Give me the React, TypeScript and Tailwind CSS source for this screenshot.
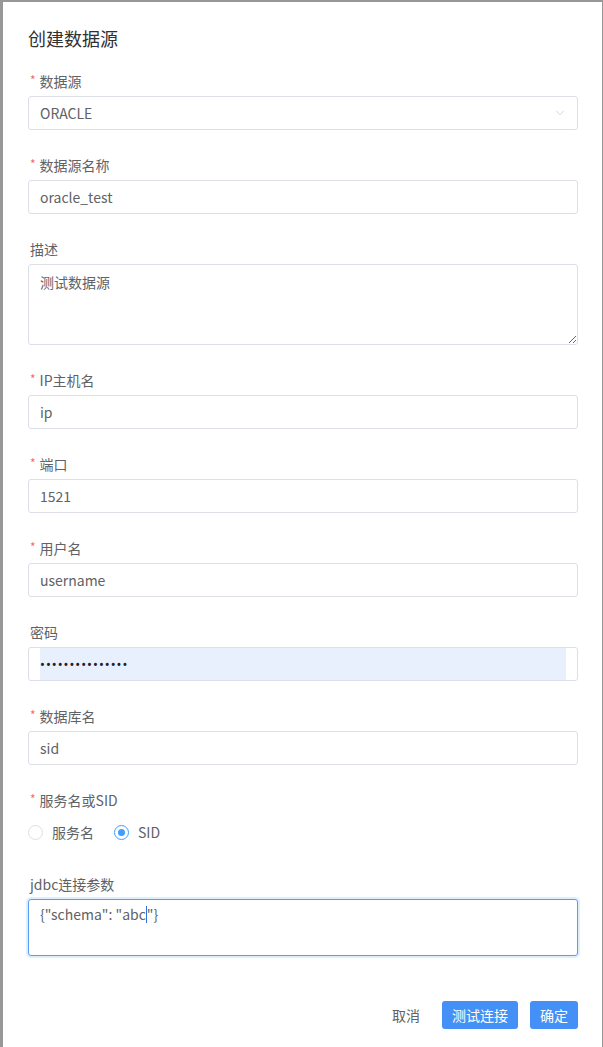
import { ChevronDown } from 'lucide-react'

const font = { fontFamily: '"Noto Sans CJK SC", "Noto Sans", sans-serif' }

function Label({ text, required }: { text: string; required?: boolean }) {
  return (
    <div className="h-5 flex items-center pb-[2px] text-[14px] leading-5 text-[#606266] mb-1 ml-[2px]">
      {required && <span className="text-[#f56c6c] text-[12px] mr-[4px] -mt-[2px]">*</span>}
      {text}
    </div>
  )
}

function TextInput({ value }: { value: string }) {
  return (
    <div className="h-[34px] border border-[#dcdfe6] rounded-[3px] px-[11px] flex items-center text-[14px] text-[#606266]">
      {value}
    </div>
  )
}

export default function App() {
  const fields = [
    { label: 'IP主机名', value: 'ip' },
    { label: '端口', value: '1521' },
    { label: '用户名', value: 'username' },
  ]

  return (
    <div className="w-[603px] min-h-[1047px] bg-[#979797] pt-[2px] pl-[3px] pr-[1px]" style={font}>
      <div className="bg-white min-h-[1045px] pl-[25px] pr-[24px] pt-[24px] pb-[19px]">
        <div className="text-[18px] leading-6 text-[#303133] mb-[22px]">创建数据源</div>

        {/* 数据源 */}
        <div className="mb-[26px]">
          <Label text="数据源" required />
          <div className="h-[34px] border border-[#dcdfe6] rounded-[3px] pl-[11px] pr-[10px] flex items-center justify-between text-[14px] text-[#606266]">
            <span>ORACLE</span>
            <ChevronDown className="w-[14px] h-[14px] text-[#c0c4cc]" strokeWidth={1.2} />
          </div>
        </div>

        <div className="mb-[26px]">
          <Label text="数据源名称" required />
          <TextInput value="oracle_test" />
        </div>

        <div className="mb-[26px]">
          <Label text="描述" />
          <textarea
            readOnly
            defaultValue="测试数据源"
            className="block w-full h-[81px] border border-[#dcdfe6] rounded-[3px] px-[11px] py-[7px] text-[14px] leading-5 text-[#606266] outline-none resize-y"
          />
        </div>

        {fields.map((f) => (
          <div key={f.label} className="mb-[26px]">
            <Label text={f.label} required />
            <TextInput value={f.value} />
          </div>
        ))}

        {/* 密码 */}
        <div className="mb-[26px]">
          <Label text="密码" />
          <div className="h-[34px] border border-[#dcdfe6] rounded-[3px] px-[11px] flex">
            <input
              type="password"
              readOnly
              defaultValue="passwordpasswor"
              style={{ fontFamily: '"Noto Sans", sans-serif' }}
              className="w-full h-full bg-[#e8f0fe] text-[13px] text-[#202124] outline-none tracking-[1px]"
            />
          </div>
        </div>

        <div className="mb-[26px]">
          <Label text="数据库名" required />
          <TextInput value="sid" />
        </div>

        {/* 服务名或SID */}
        <div className="mb-[26px]">
          <Label text="服务名或SID" required />
          <div className="h-[34px] flex items-center text-[14px] text-[#606266]">
            <span className="shrink-0 w-[15px] h-[15px] rounded-full border border-[#dcdfe6] bg-white mr-[9px]" />
            <span className="mr-[20px]">服务名</span>
            <span className="shrink-0 w-[15px] h-[15px] rounded-full border border-[#409eff] flex items-center justify-center mr-[9px]">
              <span className="w-[7px] h-[7px] rounded-full bg-[#409eff]" />
            </span>
            <span>SID</span>
          </div>
        </div>

        {/* jdbc连接参数 */}
        <div>
          <Label text="jdbc连接参数" />
          <div className="h-[57px] border border-[#5b9cf2] rounded-[3px] px-[11px] pt-[4px] text-[14px] leading-5 text-[#606266] shadow-[0_0_0_2px_rgba(64,158,255,0.18)]">
            {'{"schema": "abc'}
            <span className="inline-block w-px h-[17px] bg-[#2f6fe0] align-[-3px]" />
            {'"}'}
          </div>
        </div>

        {/* footer */}
        <div className="flex justify-end items-center gap-3 mt-[45px]">
          <button className="h-7 px-[10px] text-[14px] text-[#606266]">取消</button>
          <button className="h-7 px-[10px] rounded-[3px] bg-[#4590f6] text-white text-[14px]">测试连接</button>
          <button className="h-7 px-[10px] rounded-[3px] bg-[#4590f6] text-white text-[14px]">确定</button>
        </div>
      </div>
    </div>
  )
}
